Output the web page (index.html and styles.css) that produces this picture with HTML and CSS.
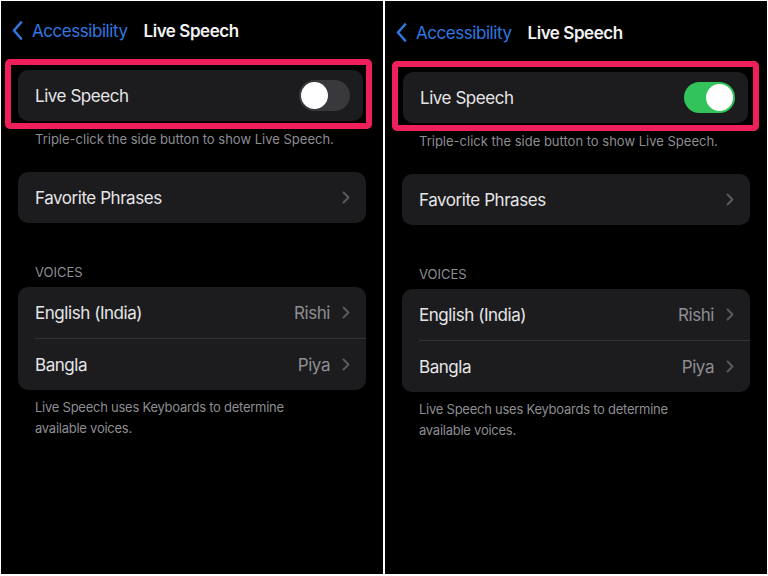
FILE: index.html
```html
<!DOCTYPE html>
<html>
<head>
<meta charset="utf-8">
<link rel="stylesheet" href="styles.css">
</head>
<body>
<div class="frame">
  <div class="panel">
    <div class="nav">
      <span class="back">
        <svg class="back-chev" width="11" height="19" viewBox="0 0 11 19"><path d="M9 1.5 L2 9.5 L9 17.5" fill="none" stroke="currentColor" stroke-width="2.6" stroke-linecap="round" stroke-linejoin="round"/></svg>
        <span>Accessibility</span>
      </span>
      <span class="title">Live Speech</span>
    </div>
    <div class="highlight">
      <div class="card">
        <div class="row row-first">
          <span class="label">Live Speech</span>
          <span class="toggle"><span class="knob"></span></span>
        </div>
      </div>
    </div>
    <p class="foot foot-top">Triple-click the side button to show Live Speech.</p>
    <div class="card card-fav">
      <div class="row">
        <span class="label">Favorite Phrases</span>
        <svg class="chev" width="8" height="13" viewBox="0 0 8 13"><path d="M1.5 1.5 L6.5 6.5 L1.5 11.5" fill="none" stroke="currentColor" stroke-width="1.8" stroke-linecap="round" stroke-linejoin="round"/></svg>
      </div>
    </div>
    <div class="section">VOICES</div>
    <div class="card">
      <div class="row">
        <span class="label">English (India)</span>
        <span class="value">Rishi</span>
        <svg class="chev" width="8" height="13" viewBox="0 0 8 13"><path d="M1.5 1.5 L6.5 6.5 L1.5 11.5" fill="none" stroke="currentColor" stroke-width="1.8" stroke-linecap="round" stroke-linejoin="round"/></svg>
      </div>
      <div class="sep"></div>
      <div class="row">
        <span class="label">Bangla</span>
        <span class="value">Piya</span>
        <svg class="chev" width="8" height="13" viewBox="0 0 8 13"><path d="M1.5 1.5 L6.5 6.5 L1.5 11.5" fill="none" stroke="currentColor" stroke-width="1.8" stroke-linecap="round" stroke-linejoin="round"/></svg>
      </div>
    </div>
    <p class="foot foot-bottom">Live Speech uses Keyboards to determine<br>available voices.</p>
  </div>

  <div class="panel panel-right">
    <div class="nav">
      <span class="back">
        <svg class="back-chev" width="11" height="19" viewBox="0 0 11 19"><path d="M9 1.5 L2 9.5 L9 17.5" fill="none" stroke="currentColor" stroke-width="2.6" stroke-linecap="round" stroke-linejoin="round"/></svg>
        <span>Accessibility</span>
      </span>
      <span class="title">Live Speech</span>
    </div>
    <div class="highlight highlight-right">
      <div class="card">
        <div class="row row-first">
          <span class="label">Live Speech</span>
          <span class="toggle toggle-on"><span class="knob"></span></span>
        </div>
      </div>
    </div>
    <p class="foot foot-top">Triple-click the side button to show Live Speech.</p>
    <div class="card card-fav">
      <div class="row">
        <span class="label">Favorite Phrases</span>
        <svg class="chev" width="8" height="13" viewBox="0 0 8 13"><path d="M1.5 1.5 L6.5 6.5 L1.5 11.5" fill="none" stroke="currentColor" stroke-width="1.8" stroke-linecap="round" stroke-linejoin="round"/></svg>
      </div>
    </div>
    <div class="section">VOICES</div>
    <div class="card">
      <div class="row">
        <span class="label">English (India)</span>
        <span class="value">Rishi</span>
        <svg class="chev" width="8" height="13" viewBox="0 0 8 13"><path d="M1.5 1.5 L6.5 6.5 L1.5 11.5" fill="none" stroke="currentColor" stroke-width="1.8" stroke-linecap="round" stroke-linejoin="round"/></svg>
      </div>
      <div class="sep"></div>
      <div class="row">
        <span class="label">Bangla</span>
        <span class="value">Piya</span>
        <svg class="chev" width="8" height="13" viewBox="0 0 8 13"><path d="M1.5 1.5 L6.5 6.5 L1.5 11.5" fill="none" stroke="currentColor" stroke-width="1.8" stroke-linecap="round" stroke-linejoin="round"/></svg>
      </div>
    </div>
    <p class="foot foot-bottom">Live Speech uses Keyboards to determine<br>available voices.</p>
  </div>
</div>
</body>
</html>
```

FILE: styles.css
```css
html, body {
  margin: 0;
  padding: 0;
  background: #ffffff;
}

body {
  width: 768px;
  height: 576px;
  overflow: hidden;
  font-family: Inter, "Liberation Sans", sans-serif;
}

.frame {
  display: flex;
  gap: 2px;
  padding: 1px 1px 2px 1px;
  height: 573px;
}

.panel {
  flex: 1;
  background: #000000;
  padding: 9px 17px 0 17px;
  display: flex;
  flex-direction: column;
  min-width: 0;
}

.panel-right {
  padding-top: 11px;
}

.nav {
  height: 41px;
  display: flex;
  align-items: center;
  margin-left: -6px;
  gap: 16px;
}

.back {
  display: flex;
  align-items: center;
  gap: 9px;
  color: #3177e0;
  font-size: 17px;
  letter-spacing: -0.45px;
}

.back-chev {
  display: block;
}

.title {
  color: #f2f2f4;
  font-size: 17px;
  font-weight: 600;
  letter-spacing: -0.45px;
}

.highlight {
  margin: 8px -6px 0 -13px;
  border: 6px solid #ef1f5c;
  border-radius: 5px;
  padding: 5px 3px 2px 7px;
}

.highlight-right {
  margin-left: -10px;
  margin-right: -9px;
  padding-left: 5px;
  padding-right: 5px;
}

.card {
  background: #1c1c1e;
  border-radius: 10px;
  overflow: hidden;
}

.row {
  height: 51px;
  display: flex;
  align-items: center;
  padding: 0 16px 0 17px;
}

.row-first {
  height: 51px;
}

.label {
  flex: 1;
  color: #e6e6e8;
  font-size: 17px;
  letter-spacing: -0.45px;
  padding-top: 1px;
}

.value {
  color: #8e8e93;
  font-size: 17px;
  letter-spacing: -0.45px;
  margin-right: 12px;
  padding-top: 1px;
}

.chev {
  display: block;
  color: #5b5b60;
}

.sep {
  height: 1px;
  background: #323235;
  margin-left: 17px;
}

.toggle {
  width: 51px;
  height: 31px;
  border-radius: 16px;
  background: #39393d;
  position: relative;
  margin-right: -3px;
}

.toggle-on {
  background: #32c35a;
}

.knob {
  position: absolute;
  top: 2px;
  left: 2px;
  width: 27px;
  height: 27px;
  border-radius: 50%;
  background: #ffffff;
}

.toggle-on .knob {
  left: 22px;
}

.foot {
  margin: 0;
  color: #8d8d92;
  font-size: 13px;
  padding-left: 17px;
}

.foot-top {
  margin-top: 1px;
  line-height: 18px;
  letter-spacing: 0;
}

.card-fav {
  margin-top: 24px;
}

.section {
  margin-top: 41px;
  padding-left: 17px;
  color: #8d8d92;
  font-size: 13px;
  line-height: 16px;
}

.section + .card {
  margin-top: 7px;
}

.foot-bottom {
  margin-top: 7px;
  line-height: 21px;
  letter-spacing: -0.25px;
}
```
